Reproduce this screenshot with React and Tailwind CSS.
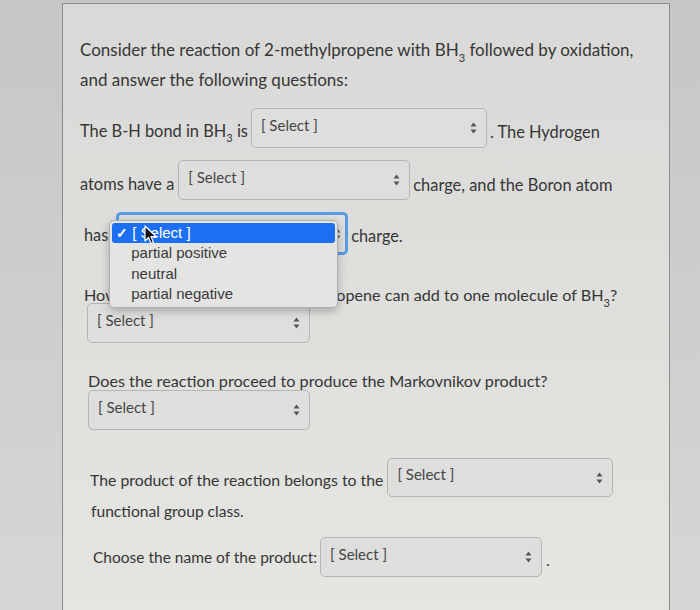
import React from "react";

const lato = { fontFamily: "Lato, 'Open Sans', sans-serif" };

const Arrows = () => (
  <svg width="7" height="12" viewBox="0 0 7 12" className="shrink-0">
    <path d="M3.5 0.5 L6.5 4.5 L0.5 4.5 Z" fill="#555" />
    <path d="M3.5 11.5 L6.5 7.5 L0.5 7.5 Z" fill="#555" />
  </svg>
);

const Select = ({ width, height = 40, className = "" }) => (
  <div
    className={`flex items-center justify-between shrink-0 rounded-[5px] border border-[#b5b5b3] bg-[#dededc] pl-[9px] pr-[9px] ${className}`}
    style={{ width, height }}
  >
    <span className="text-[15px] text-[#454545] -mt-[6px]" style={lato}>
      [ Select ]
    </span>
    <Arrows />
  </div>
);

const Sub3 = () => <sub className="text-[11px] align-[-3px]">3</sub>;

const Cursor = () => (
  <svg
    width="13"
    height="20"
    viewBox="0 0 13 20"
    className="absolute left-[32px] top-[2px]"
  >
    <path
      d="M1 1 L1 16 L4.5 12.5 L7 18.5 L9.5 17.5 L7 11.5 L12 11.5 Z"
      fill="#111"
      stroke="#fff"
      strokeWidth="1.2"
      strokeLinejoin="round"
    />
  </svg>
);

const DropdownMenu = () => (
  <div
    className="absolute left-[-7px] top-[8px] z-10 w-[229px] rounded-[5px] border border-[#b0b0b0] bg-[#e4e4e2] py-[2px] shadow-[0_3px_8px_rgba(0,0,0,0.25)]"
    style={{ fontFamily: "'Liberation Sans', Arial, sans-serif" }}
  >
    <div className="relative mx-[2px] flex h-[20px] items-center rounded-[3px] bg-[#1d6ff2] text-[15px] text-white">
      <span className="w-[20px] pl-[4px] text-[14px] font-bold">✓</span>
      <span>[ Select ]</span>
      <Cursor />
    </div>
    <div className="flex h-[20.5px] items-center pl-[21px] text-[15px] text-[#3a3a3a]">
      partial positive
    </div>
    <div className="flex h-[20.5px] items-center pl-[21px] text-[15px] text-[#3a3a3a]">
      neutral
    </div>
    <div className="flex h-[20.5px] items-center pl-[21px] text-[15px] text-[#3a3a3a]">
      partial negative
    </div>
  </div>
);

export default function App() {
  return (
    <div className="h-[610px] w-[700px] overflow-hidden bg-gradient-to-b from-[#c6c6c6] to-[#d6d6d4] pl-[62px] pt-[3px]">
      <div
        className="h-[607px] w-[608px] border-l border-r border-t border-[#8c8c8c] bg-gradient-to-b from-[#d9d9d7] to-[#e5e5e2] pl-[17px] pt-[31px] text-[#363636]"
        style={lato}
      >
        <p className="text-[17px] leading-[30px]">
          Consider the reaction of 2-methylpropene with BH<Sub3 /> followed by
          oxidation,
          <br />
          and answer the following questions:
        </p>

        <div className="mt-[13px] flex items-center text-[16.4px]">
          <span className="mt-[6px] mr-[3px]">
            The B-H bond in BH<Sub3 /> is
          </span>
          <Select width={236} />
          <span className="ml-[3px] mt-[8px]">. The Hydrogen</span>
        </div>

        <div className="mt-[12px] flex items-center text-[16.4px]">
          <span className="mt-[8px] mr-[4px]">atoms have a</span>
          <Select width={232} />
          <span className="ml-[3px] mt-[10px]">charge, and the Boron atom</span>
        </div>

        <div className="mt-[12px] ml-[4px] flex items-center text-[16.3px]">
          <span className="mt-[4px] mr-[8px]">has</span>
          <div className="relative">
            <div className="flex h-[43px] w-[232px] items-center justify-end rounded-[5px] border-[3px] border-[#5a9be6] bg-[#dededc] pr-[4px]">
              <Arrows />
            </div>
            <DropdownMenu />
          </div>
          <span className="ml-[3px] mt-[6px]">charge.</span>
        </div>

        <p className="mt-[32px] ml-[4px] text-[16.2px] leading-[16px]">
          How many molecules of 2-methylpropene can add to one molecule of BH
          <Sub3 />?
        </p>
        <Select width={223} className="ml-[7px]" />

        <p className="mt-[30px] ml-[8px] text-[16.2px] leading-[16px]">
          Does the reaction proceed to produce the Markovnikov product?
        </p>
        <Select width={222} className="ml-[8px] mt-[1px]" />

        <div className="mt-[28px] ml-[10px] flex items-center text-[15.8px]">
          <span className="mt-[4px] mr-[4px]">
            The product of the reaction belongs to the
          </span>
          <Select width={226} height={39} />
        </div>

        <p className="mt-[6px] ml-[11px] text-[15.6px] leading-[16px]">
          functional group class.
        </p>

        <div className="mt-[18px] ml-[13px] flex items-center text-[15.5px]">
          <span className="mt-[2px] mr-[3px]">
            Choose the name of the product:
          </span>
          <Select width={222} />
          <span className="ml-[4px] mt-[8px]">.</span>
        </div>
      </div>
    </div>
  );
}
